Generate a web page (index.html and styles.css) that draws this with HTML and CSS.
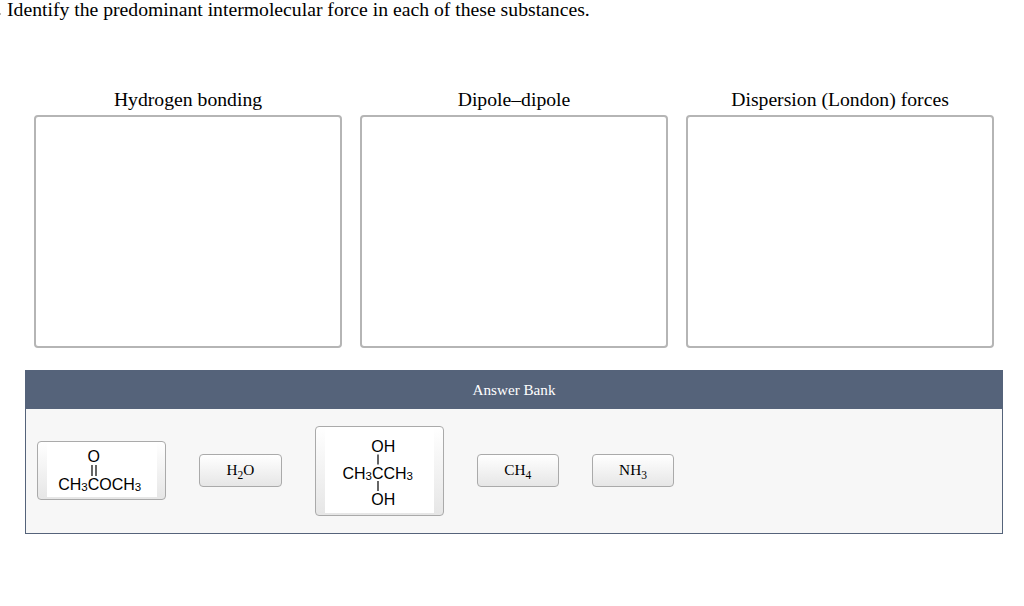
FILE: index.html
```html
<!DOCTYPE html>
<html lang="en">
<head>
    <meta charset="UTF-8">
    <title>Intermolecular forces</title>
    <meta name="viewport" content="width=device-width, initial-scale=1.0">
    <link rel="stylesheet" href="styles.css">
</head>
<body>
    <p class="question"><span class="stub"></span>Identify the predominant intermolecular force in each of these substances.</p>

    <div class="bins">
        <div class="bin">
            <div class="bin-title">Hydrogen bonding</div>
            <div class="bin-box"></div>
        </div>
        <div class="bin">
            <div class="bin-title">Dipole–dipole</div>
            <div class="bin-box"></div>
        </div>
        <div class="bin">
            <div class="bin-title">Dispersion (London) forces</div>
            <div class="bin-box"></div>
        </div>
    </div>

    <div class="bank">
        <div class="bank-header">Answer Bank</div>
        <div class="bank-items">
            <!-- methyl acetate -->
            <div class="tile tile-structure">
                <svg class="structure" width="110" height="55" viewBox="0 0 110 55">
                    <text x="40.5" y="20">O</text>
                    <path d="M45 23V34M49 23V34"/>
                    <text x="11.2" y="48">CH<tspan class="small" dy="1.3">3</tspan><tspan dy="-1.3">COCH</tspan><tspan class="small" dy="1.3">3</tspan></text>
                </svg>
            </div>
            <div class="tile">H<span class="sub">2</span>O</div>
            <!-- propane-2,2-diol -->
            <div class="tile tile-structure">
                <svg class="structure" width="109" height="86" viewBox="0 0 109 86">
                    <text x="46.2" y="25">OH</text>
                    <path d="M53 27.5V37.5M53 54V64"/>
                    <text x="17.4" y="52">CH<tspan class="small" dy="1.3">3</tspan><tspan dy="-1.3">CCH</tspan><tspan class="small" dy="1.3">3</tspan></text>
                    <text x="46.2" y="78">OH</text>
                </svg>
            </div>
            <div class="tile">CH<span class="sub">4</span></div>
            <div class="tile">NH<span class="sub">3</span></div>
        </div>
    </div>
</body>
</html>
```
FILE: styles.css
```css
body {
    margin: 0;
    font-family: "Liberation Serif", "Times New Roman", serif;
    background-color: #fff;
    color: #000;
}

.question {
    display: flex;
    margin: 0;
    height: 88px;
    font-size: 19.7px;
    line-height: 18px;
}

.stub {
    width: 1px;
    height: 2px;
    margin: 13px 6px 0 0;
    background-color: #bbb;
}

.bins {
    display: flex;
    gap: 18px;
    padding: 0 30px 0 34px;
}

.bin {
    width: 308px;
}

.bin-title {
    height: 26.5px;
    font-size: 19.7px;
    line-height: 22px;
    text-align: center;
}

.bin-box {
    box-sizing: border-box;
    height: 233.5px;
    border: 2px solid #b5b5b5;
    border-radius: 4px;
}

.bank {
    box-sizing: border-box;
    width: 978px;
    height: 164px;
    margin: 22px 0 0 25px;
    border: 1px solid #55637a;
    background-color: #f7f7f7;
}

.bank-header {
    height: 38px;
    background-color: #55637a;
    color: #fff;
    font-size: 15.2px;
    line-height: 37px;
    text-align: center;
}

.bank-items {
    display: flex;
    align-items: center;
    gap: 33px;
    height: 123.3px;
    padding-left: 11.3px;
}

.tile {
    box-sizing: border-box;
    width: 82.3px;
    height: 33px;
    border: 1px solid #aaa;
    border-radius: 4px;
    background: linear-gradient(#fff, #e6e6e6);
    font-size: 15.3px;
    line-height: 29px;
    text-align: center;
}

.sub {
    position: relative;
    top: 4px;
    font-size: 11.5px;
    line-height: 1;
}

.tile-structure {
    width: 129px;
    height: auto;
    padding-bottom: 2px;
    line-height: 0;
}

.structure {
    background-color: #fff;
    font-family: "Liberation Sans", Arial, sans-serif;
    font-size: 16px;
}

.structure path {
    stroke: #000;
    stroke-width: 1.2;
}

.small {
    font-size: 11.5px;
}
```
